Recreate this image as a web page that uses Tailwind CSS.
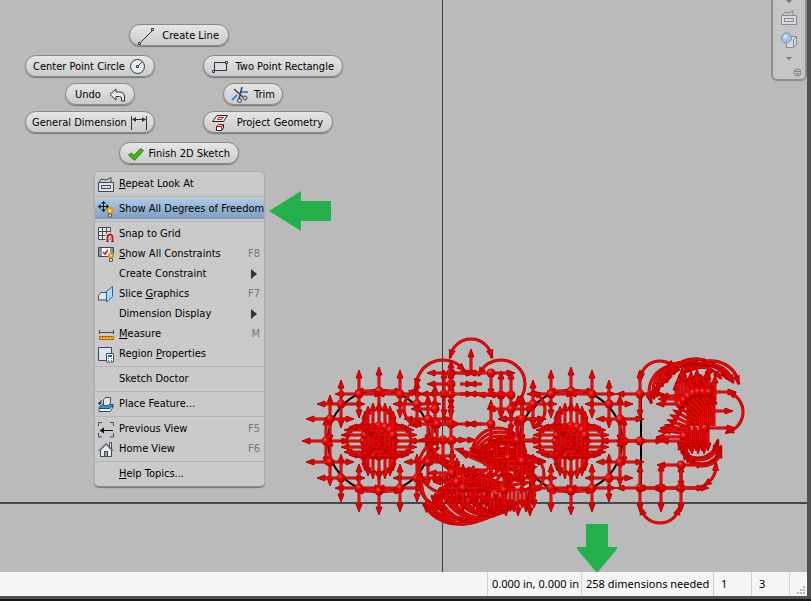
<!DOCTYPE html>
<html lang="en">
<head>
  <meta charset="UTF-8" />
  <meta name="viewport" content="width=device-width, initial-scale=1" />
  <title>2D Sketch</title>
  <script src="https://cdn.jsdelivr.net/npm/@tailwindcss/browser@4"></script>
</head>
<body class="h-screen overflow-hidden bg-[#505050] text-black font-['DejaVu_Sans_Condensed','DejaVu_Sans',sans-serif]">
  <div class="flex h-full flex-col border-b-2 border-[#15151c] pb-[3px] pr-1">

    <main class="relative min-h-0 flex-1 overflow-hidden bg-[#bababa]">
      <!-- origin axes -->
      <div class="absolute inset-y-0 left-[442px] w-px bg-[#3c3c3c]"></div>
      <div class="absolute inset-x-0 top-[502px] h-[2px] bg-[#484848]"></div>

      <svg id="sketch" class="absolute left-0 top-0" width="807" height="572" fill="none" aria-label="Sketch geometry">
        <defs>
          <radialGradient id="ball" cx="0.4" cy="0.35" r="0.65">
            <stop offset="0" stop-color="#ff5050" />
            <stop offset="0.4" stop-color="#e60808" />
            <stop offset="1" stop-color="#a80000" />
          </radialGradient>
        </defs>
        <g stroke="#000" stroke-width="2">
          <circle cx="379" cy="441" r="51" />
          <circle cx="571" cy="441" r="51" />
          <path d="M641 394V488" />
        </g>
        <g id="dof"></g>
      </svg>

      <!-- annotation arrows -->
      <svg class="absolute left-[269px] top-[191px]" width="62" height="40" fill="#24b14c"><path d="M0 20L32 0V10H62V30H32V40Z" /></svg>
      <svg class="absolute left-[577px] top-[524px]" width="40" height="49" fill="#24b14c"><path d="M9 0H31V23H40V25L20 49L0 25V23H9Z" /></svg>

      <!-- marking menu -->
      <nav class="absolute left-[25px] top-6 flex w-[308px] flex-col items-center gap-[9px] text-[11px] leading-4 whitespace-nowrap">
        <button class="flex h-[22px] w-[100px] items-center justify-between rounded-full border border-[#8a8a8a] bg-linear-to-b from-[#e6e6e6] to-[#cbcbcb] pt-[2px] pl-2 pr-[9px] shadow-[0_1px_1px_#777]">
          <svg width="17" height="17" fill="none" stroke="#2b3440"><path d="M3 14L14 3" /><path fill="#ddd" d="M.5 14.500h2v2h-2zM13.500 .5h2v2h-2z" /></svg>
          <span>Create Line</span>
        </button>

        <div class="flex w-full gap-12">
          <div class="flex w-[130px] shrink-0 flex-col items-end gap-[6px]">
            <button class="flex h-[22px] w-full items-center justify-between rounded-full border border-[#8a8a8a] bg-linear-to-b from-[#e6e6e6] to-[#cbcbcb] pt-[2px] pl-[7px] pr-2 shadow-[0_1px_1px_#777]">
              <span>Center Point Circle</span>
              <svg width="17" height="17" fill="none" stroke="#2b3440"><circle cx="8.500" cy="7.500" r="7" fill="#e8ebf0" /><path d="M9 7L13 3" /><path fill="#fff" d="M7.500 6.500h2v2h-2z" /></svg>
            </button>
            <button class="mr-5 flex h-[22px] w-[70px] items-center justify-between rounded-full border border-[#8a8a8a] bg-linear-to-b from-[#e6e6e6] to-[#cbcbcb] pt-[2px] pl-[9px] pr-2 shadow-[0_1px_1px_#777]">
              <span>Undo</span>
              <svg width="17" height="17" fill="#e8ebf0" stroke="#2b3440"><path d="M1 7.500L7 2V5H11Q15.500 5.500 15.500 10V14H12.500V11Q12 9.500 10.500 9.500H7V13Z" /></svg>
            </button>
            <button class="flex h-[22px] w-full items-center justify-between rounded-full border border-[#8a8a8a] bg-linear-to-b from-[#e6e6e6] to-[#cbcbcb] pt-[2px] pl-[6px] pr-[7px] shadow-[0_1px_1px_#777]">
              <span>General Dimension</span>
              <svg width="17" height="17" fill="none" stroke="#2b3440"><path d="M1.500 1V15M16.500 1V15M3 4.500H15" /><path fill="#2b3440" stroke="none" d="M2 4.500L6 2V7ZM16 4.500L12 2V7Z" /></svg>
            </button>
          </div>
          <div class="flex shrink-0 flex-col items-start gap-[6px]">
            <button class="flex h-[22px] w-[140px] items-center justify-between rounded-full border border-[#8a8a8a] bg-linear-to-b from-[#e6e6e6] to-[#cbcbcb] pt-[2px] px-2 shadow-[0_1px_1px_#777]">
              <svg width="17" height="17" fill="none" stroke="#2b3440"><path fill="#d8dbe0" d="M2.500 3.500H14.500V11.500H2.500Z" /><path fill="#eee" d="M.5 11.500h2v2h-2zM13.500 2.500h2v2h-2z" /></svg>
              <span>Two Point Rectangle</span>
            </button>
            <button class="ml-5 flex h-[22px] w-[60px] items-center justify-between rounded-full border border-[#8a8a8a] bg-linear-to-b from-[#e6e6e6] to-[#cbcbcb] pt-[2px] px-[7px] shadow-[0_1px_1px_#777]">
              <svg width="18" height="17" fill="none"><path stroke="#2a92e6" stroke-width="2" d="M1 13L6 8M10 5H17" /><path stroke="#3a424e" stroke-width="1.500" d="M3 2L12 10M11 0L8 12" /><g stroke="#3a424e"><circle cx="8.500" cy="13.500" r="2" /><circle cx="14" cy="11" r="2" /></g></svg>
              <span>Trim</span>
            </button>
            <button class="flex h-[22px] w-[130px] items-center justify-between rounded-full border border-[#8a8a8a] bg-linear-to-b from-[#e6e6e6] to-[#cbcbcb] pt-[2px] pl-2 pr-[9px] shadow-[0_1px_1px_#777]">
              <svg width="17" height="17" fill="none"><path stroke="#222" fill="#eee" d="M5 .5H15.500L11.500 6.500H.5Z" /><path stroke="#e01010" d="M6.500 2.500H11.500L9.500 4.500H5.500Z" /><path stroke="#222" fill="#fff" d="M4.500 11.500H9.500V15.500H4.500ZM9.500 15.500L11.500 13V9.500" /><path stroke="#e01010" d="M4.500 12V11.500L6.500 9.500H11.500L9.500 11.500V15M4.500 11.500H9.500" /></svg>
              <span>Project Geometry</span>
            </button>
          </div>
        </div>

        <button class="flex h-[22px] w-[120px] items-center justify-between rounded-full border border-[#8a8a8a] bg-linear-to-b from-[#e6e6e6] to-[#cbcbcb] pt-[2px] px-2 shadow-[0_1px_1px_#777]">
          <svg width="17" height="17"><path fill="#43b513" stroke="#2b8508" d="M.5 9L3.500 7L6 9.500L12.500 2.500L15.500 4.500L6.500 14.500Z" /></svg>
          <span>Finish 2D Sketch</span>
        </button>
      </nav>

      <!-- context menu -->
      <ul class="absolute left-[94px] top-[171px] w-[171px] rounded-[5px] border border-[#b0b0b0] border-b-[#888] bg-[#cacaca] pb-[2px] pt-[2px] text-[11px] leading-4 whitespace-nowrap shadow-[0_1px_1px_#777]">
        <li><button class="flex h-5 w-full items-center gap-[5px] pl-[3px] pr-1">
          <svg class="shrink-0" width="16" height="17" fill="none" stroke="#414a58"><path d="M1.500 6L3 3L8 4L13 1.500V6" /><path fill="#dfe2e8" d="M.5 6.500H15.500V15.500H.5Z" /><path d="M3.500 9.500H12.500V12.500H3.500Z" /></svg>
          <span><u>R</u>epeat Look At</span></button></li>
        <li class="flex h-[5px] items-center"><hr class="w-full border-[#b5b5b5]" /></li>
        <li><button class="flex h-5 w-full items-center gap-[5px] bg-linear-to-b from-[#acc8e8] to-[#7f9dbf] pl-[3px]">
          <svg class="shrink-0" width="16" height="17" fill="none"><path stroke="#111" d="M5.500 1V10M1 5.500H10" /><path fill="#111" d="M5.500 0L8 2.500H3ZM5.500 11L3 8.500H8ZM0 5.500L2.500 3V8ZM11 5.500L8.500 3V8Z" /><circle cx="12" cy="9.500" r="2.500" fill="#fff3a0" stroke="#ec9412" stroke-width="2" /><path stroke="#555d68" fill="#ddd" d="M10.500 13H13.500V16H10.500Z" /></svg>
          <span>Show All Degrees of Freedom</span></button></li>
        <li class="flex h-[5px] items-center"><hr class="w-full border-[#b5b5b5]" /></li>
        <li><button class="flex h-5 w-full items-center gap-[5px] pl-[3px] pr-1">
          <svg class="shrink-0" width="16" height="17" fill="none"><path fill="#e8e8e8" stroke="#414a58" d="M.5 1.500H12.500V13.500H.5ZM4.500 1V14M8.500 1V14M0 5.500H13M0 9.500H13" /><path stroke="#e8e8e8" stroke-width="4" d="M9.500 16V11Q9.500 8.500 12 8.500T14.500 11V16" /><path stroke="#c81820" stroke-width="2" d="M9.500 15V11Q9.500 8.500 12 8.500T14.500 11V15" /><path stroke="#414a58" d="M8 15.500H11M13 15.500H16" /></svg>
          <span>Snap to Grid</span></button></li>
        <li><button class="flex h-5 w-full items-center gap-[5px] pl-[3px] pr-1">
          <svg class="shrink-0" width="16" height="17" fill="none"><path fill="#8a929e" stroke="#414a58" d="M.5 1.500H15.500V10.500H.5Z" /><path fill="#fff" d="M4 2H12V10H4Z" /><path stroke="#d01010" stroke-width="1.500" d="M5 6L7 8L10 4" /><circle cx="13" cy="9.500" r="2" fill="#fff3a0" stroke="#ec9412" stroke-width="2" /><path stroke="#555d68" fill="#ddd" d="M11.500 12.500H14.500V15.500H11.500Z" /></svg>
          <span><u>S</u>how All Constraints</span><kbd class="ml-auto font-[inherit] text-[#777]">F8</kbd></button></li>
        <li><button class="flex h-5 w-full items-center gap-[5px] pl-[3px] pr-1">
          <span class="w-4 shrink-0"></span><span>Create Constraint</span>
          <svg class="ml-auto mr-[3px]" width="6" height="10" fill="#333"><path d="M0 0L6 5L0 10Z" /></svg></button></li>
        <li><button class="flex h-5 w-full items-center gap-[5px] pl-[3px] pr-1">
          <svg class="shrink-0" width="16" height="17" fill="none"><path fill="#e4e6ea" stroke="#414a58" d="M.5 14V9.500L3 6.500H9V14Z" /><path fill="#b9d8f2" stroke="#1468b4" d="M8.500 5.500L14.500 .5V10.500L8.500 16Z" /></svg>
          <span>Slice <u>G</u>raphics</span><kbd class="ml-auto font-[inherit] text-[#777]">F7</kbd></button></li>
        <li><button class="flex h-5 w-full items-center gap-[5px] pl-[3px] pr-1">
          <span class="w-4 shrink-0"></span><span>Dimension Display</span>
          <svg class="ml-auto mr-[3px]" width="6" height="10" fill="#333"><path d="M0 0L6 5L0 10Z" /></svg></button></li>
        <li><button class="flex h-5 w-full items-center gap-[5px] pl-[3px] pr-1">
          <svg class="shrink-0" width="16" height="17" fill="none"><path stroke="#414a58" d="M1.500 4V8M15.500 4V8M1 6.500H16" /><path fill="#f8bd20" stroke="#a86408" d="M1.500 10.500H15.500V13.500H1.500Z" /><path stroke="#a86408" d="M4.500 10V12M7.500 10V12M10.500 10V12M13.500 10V12" /></svg>
          <span><u>M</u>easure</span><kbd class="ml-auto font-[inherit] text-[#777]">M</kbd></button></li>
        <li><button class="flex h-5 w-full items-center gap-[5px] pl-[3px] pr-1">
          <svg class="shrink-0" width="16" height="17" fill="none"><path fill="#dfe2e8" stroke="#414a58" d="M.5 1.500H13.500V14.500H.5Z" /><path fill="#fff" stroke="#414a58" d="M8.500 7.500H15.500V16H8.500Z" /><path fill="#1468b4" d="M10 9H14V11H10ZM10 12H11V13H10ZM13 12H14V13H13ZM10 14H11V15H10ZM13 14H14V15H13Z" /></svg>
          <span>Region <u>P</u>roperties</span></button></li>
        <li class="flex h-[5px] items-center"><hr class="w-full border-[#b5b5b5]" /></li>
        <li><button class="flex h-5 w-full items-center gap-[5px] pl-[3px] pr-1">
          <span class="w-4 shrink-0"></span><span>Sketch Doctor</span></button></li>
        <li class="flex h-[5px] items-center"><hr class="w-full border-[#b5b5b5]" /></li>
        <li><button class="flex h-5 w-full items-center gap-[5px] pl-[3px] pr-1">
          <svg class="shrink-0" width="16" height="17" fill="none"><path fill="#fff" stroke="#174a80" d="M1 13.500L4 10.500H15.500L12 15.500H1Z" /><path fill="#2b9bd8" stroke="#174a80" d="M1 11.500L4 8.500H15.500L12 12.500H1Z" /><path fill="#e4e6ea" stroke="#414a58" d="M5.500 3.500L7.500 1.500H12.500V7L10.500 9.500H5.500Z" /><path stroke="#111" d="M4 4.500Q1.500 5 1.500 8M0 6.500L1.500 8.500L3.500 6.500" /></svg>
          <span>Place Feature...</span></button></li>
        <li class="flex h-[5px] items-center"><hr class="w-full border-[#b5b5b5]" /></li>
        <li><button class="flex h-5 w-full items-center gap-[5px] pl-[3px] pr-1">
          <svg class="shrink-0" width="16" height="17" fill="none"><path stroke="#414a58" d="M.5 5V1.500H4M12 1.500H15.500V5M15.500 12V16H12M4 16H.5V12" /><path stroke="#111" d="M4 9.500H15" /><path fill="#111" d="M1.500 9.500L6 6.500V12.500Z" /></svg>
          <span>Previous View</span><kbd class="ml-auto font-[inherit] text-[#777]">F5</kbd></button></li>
        <li><button class="flex h-5 w-full items-center gap-[5px] pl-[3px] pr-1">
          <svg class="shrink-0" width="16" height="17" fill="#e8eaee" stroke="#414a58"><path d="M11.500 6V1.500H13.500V8" /><path d="M2.500 9V15.500H13.500V9L8 3.500Z" /><path fill="none" d="M.5 10L8 2.500L15.500 10" /><path fill="#9aa2ae" d="M6.500 15.500V10.500H9.500V15.500Z" /></svg>
          <span>Home View</span><kbd class="ml-auto font-[inherit] text-[#777]">F6</kbd></button></li>
        <li class="flex h-[5px] items-center"><hr class="w-full border-[#b5b5b5]" /></li>
        <li><button class="flex h-5 w-full items-center gap-[5px] pl-[3px] pr-1">
          <span class="w-4 shrink-0"></span><span><u>H</u>elp Topics...</span></button></li>
      </ul>

      <!-- navigation bar -->
      <aside class="absolute right-0 top-0 flex h-[81px] w-9 flex-col items-center rounded-b-md border-2 border-t-0 border-[#8e8e8e] bg-[#c5c5c5]">
        <svg class="shrink-0" width="6" height="3" fill="#777"><path d="M0 0H6L3 3Z" /></svg>
        <button class="mt-[6px]" aria-label="Look At"><svg width="16" height="17" fill="none" stroke="#858990"><path d="M1.500 6L4 3L8 4L12 1.500V6" /><path fill="#d8dade" d="M.5 6.500H15.500V15.500H.5Z" /><path d="M3.500 9.500H12.500V12.500H3.500Z" /></svg></button>
        <button class="mt-[6px]" aria-label="View Face"><svg width="17" height="17" fill="none"><path fill="#dcdcdc" stroke="#858990" d="M5.500 6.500L8 4.500H15.500V12L12.500 15.500H5.500ZM12.500 15V7.500L15.500 4.500" /><circle cx="5.500" cy="6" r="5" fill="#a9c0e2" stroke="#6f8fc0" /><circle cx="4.500" cy="4.500" r="2" fill="#d5e2f4" /></svg></button>
        <svg class="mt-[8px] shrink-0" width="6" height="3" fill="#777"><path d="M0 0H6L3 3Z" /></svg>
        <button class="mb-[2px] ml-auto mr-[3px] mt-auto" aria-label="Options"><svg width="9" height="9" fill="none" stroke="#808080"><circle cx="4.500" cy="4.500" r="3.500" /><path d="M2 3.500H7" /><path fill="#808080" stroke="none" d="M2.500 5H6.500L4.500 7Z" /></svg></button>
      </aside>
    </main>

    <footer class="flex h-6 shrink-0 justify-end bg-[#f5f5f5] font-['Noto_Sans',sans-serif] text-[11px] leading-6 whitespace-nowrap">
      <div class="w-[94px] border-l border-[#cfcfcf] pl-1">0.000 in, 0.000 in</div>
      <div class="w-[132px] border-l border-[#cfcfcf] pl-1">258 dimensions needed</div>
      <div class="w-[38px] border-l border-[#cfcfcf] pl-[7px]">1</div>
      <div class="w-[38px] border-l border-[#cfcfcf] pl-[7px]">3</div>
      <div class="flex w-[18px] items-end justify-end border-l border-[#cfcfcf] p-[2px]">
        <svg width="8" height="8" fill="#b5b5b5"><path d="M6 0h2v2h-2zM3 3h2v2h-2zM6 3h2v2h-2zM0 6h2v2h-2zM3 6h2v2h-2zM6 6h2v2h-2z" /></svg>
      </div>
    </footer>
  </div>

  <script>
    const ARM = 24;
    const out = [];

    function head(x, y, deg) {
      out.push(`<path transform="translate(${x} ${y}) rotate(${deg})" d="M0 0L-8 -3V3Z" fill="#e60000" stroke="#b80000"/>`);
    }

    function tube(d) {
      out.push(`<path d="${d}" stroke="#a80000" stroke-width="3"/><path d="${d}" stroke="#e80808" stroke-width="2"/>`);
    }

    function arrow(x, y, deg, len = ARM) {
      const a = deg * Math.PI / 180;
      const ex = x + Math.cos(a) * len, ey = y + Math.sin(a) * len;
      tube(`M${x} ${y}L${ex - Math.cos(a) * 5} ${ey - Math.sin(a) * 5}`);
      head(ex, ey, deg);
    }

    function ball(x, y, r = 4.5) {
      out.push(`<circle cx="${x}" cy="${y}" r="${r}" fill="url(#ball)"/>`);
    }

    // free point: can move along both axes
    function point(x, y, dirs = 'lrud') {
      if (dirs.includes('l')) arrow(x, y, 180);
      if (dirs.includes('r')) arrow(x, y, 0);
      if (dirs.includes('u')) arrow(x, y, -90);
      if (dirs.includes('d')) arrow(x, y, 90);
      ball(x, y);
    }

    // rotation glyph, angles run clockwise on screen
    function arc(cx, cy, r, from, to) {
      const at = deg => [cx + r * Math.cos(deg * Math.PI / 180), cy + r * Math.sin(deg * Math.PI / 180)];
      const [x1, y1] = at(from), [x2, y2] = at(to);
      tube(`M${x1} ${y1}A${r} ${r} 0 ${to - from > 180 ? 1 : 0} 1 ${x2} ${y2}`);
      head(x1, y1, from - 80);
      head(x2, y2, to + 80);
    }

    function wheel(cx) {
      const ring = [[0, -50], [-20, -47], [21, -47], [-38, -37], [38, -37], [-49, -22], [49, -22], [-53, 0], [53, 0],
        [-49, 21], [49, 21], [-38, 37], [38, 37], [-20, 47], [21, 47], [0, 50]];
      ring.forEach(([x, y]) => point(cx + x, 441 + y));
      for (let i = 0; i < 16; i++) {
        const a = i * Math.PI / 8;
        point(Math.round(cx + 15 * Math.cos(a)), Math.round(441 + 15 * Math.sin(a)));
      }
    }

    wheel(379);
    wheel(571);

    // centre profile, upper part
    arc(471, 360, 21, 185, 355);
    arc(443, 387, 27, 180, 325);
    arc(501, 384, 24, 200, 415);
    arc(424, 408, 20, 110, 250);
    arc(525, 410, 20, -70, 65);
    arc(524, 474, 20, -60, 65);
    arrow(471, 373, -90);
    [[451, 373], [491, 373]].forEach(p => point(...p, 'lrd'));
    [[451, 384], [444, 394], [451, 394], [501, 395], [511, 395]].forEach(p => point(...p, 'lud'));
    [[451, 424], [491, 424], [435, 409]].forEach(p => point(...p, 'lud'));
    point(511, 409, 'lrd');
    tube('M451 394H511');
    [373, 384, 394, 424].forEach(y => { arrow(460, y, 0, 14); arrow(482, y, 180, 14); });
    [[437, 424], [443, 440]].forEach(p => point(...p, 'lrd'));
    point(452, 440, 'lrd');

    // centre profile, dense lower part
    for (let i = 0; i < 14; i++) {
      arc(458 + i * 3, 484 + i % 3, 40 - i, 15 + i * 2, 150 + i * 4);
    }
    for (let i = 0; i < 12; i++) {
      arc(498 + i, 454 + i * 3, 26 - i % 4, 175 + i * 5, 310 + i * 8);
    }
    arc(446, 466, 27, 90, 245);
    arc(450, 478, 32, 100, 250);
    arc(461, 480, 40, 80, 190);
    for (let i = 0; i < 16; i++) {
      arrow(482 + i * 3, 462 + i % 4 * 4, -90, 18 + i % 3 * 4);
      arrow(474 + i * 4, 484 + i % 3 * 4, 90, 24);
      arrow(456 + i * 4, 456 + i % 6 * 7, 180 + i % 4 * 8, 26);
      arrow(484 + i * 2, 456 + i % 6 * 6, -18 + i % 5 * 9, 24);
    }
    for (let i = 0; i < 8; i++) {
      arrow(474 + i * 4, 466 + i * 3, 120 + i * 8, 28);
      arrow(446 + i * 6, 480, 90, 24);
      arrow(462 + i * 6, 470, 160 - i * 5, 30);
    }
    [[452, 473], [457, 482], [463, 488], [504, 490], [508, 458], [517, 440]].forEach(p => point(...p));
    point(522, 461);
    point(522, 419);

    // right profile
    arc(660, 381, 20, 180, 320);
    arc(660, 503, 20, 10, 170);
    [[640, 394], [640, 488]].forEach(p => point(...p));
    point(661, 488, 'lrd');
    point(681, 488, 'lrud');
    point(640, 441, 'lr');
    point(681, 465, 'lrd');
    tube('M661 488V470');
    head(661, 463, -90);
    arrow(681, 488, 0, 28);
    arc(694, 466, 22, -10, 65);
    arc(722, 412, 21, -75, 80);
    for (let i = 0; i < 13; i++) {
      arc(676 + i * 3, 392 - i % 8, 27 - i % 3, 155 + i * 7, 280 + i * 6);
    }
    for (let i = 0; i < 6; i++) {
      arc(698 + i, 438 + i * 2, 20 - i % 3, 5, 170 - i * 4);
    }
    for (let i = 0; i < 14; i++) {
      arrow(676 + i * 3, 404 - i % 3 * 4, -90, 22 + i % 4 * 3);
      arrow(682 + i * 2, 424 + i % 3 * 3, 90, 24);
      arrow(688 + i * 2, 426, -90, 30);
      arrow(686 + i * 2, 434 - i * 3, 190 + i * 5, 24);
    }
    [396, 399, 404, 428, 431, 437, 441].forEach((y, i) => arrow(686 - i % 3 * 2, y, 180, 26));
    arrow(709, 411, 0);
    arrow(705, 428, 0, 30);
    arrow(712, 392, 0);
    [[680, 404], [684, 400], [688, 396], [693, 393], [698, 392], [703, 392], [709, 392], [684, 436], [705, 428]].forEach(([x, y]) => ball(x, y));

    document.getElementById('dof').innerHTML = out.join('');
  </script>
</body>
</html>
